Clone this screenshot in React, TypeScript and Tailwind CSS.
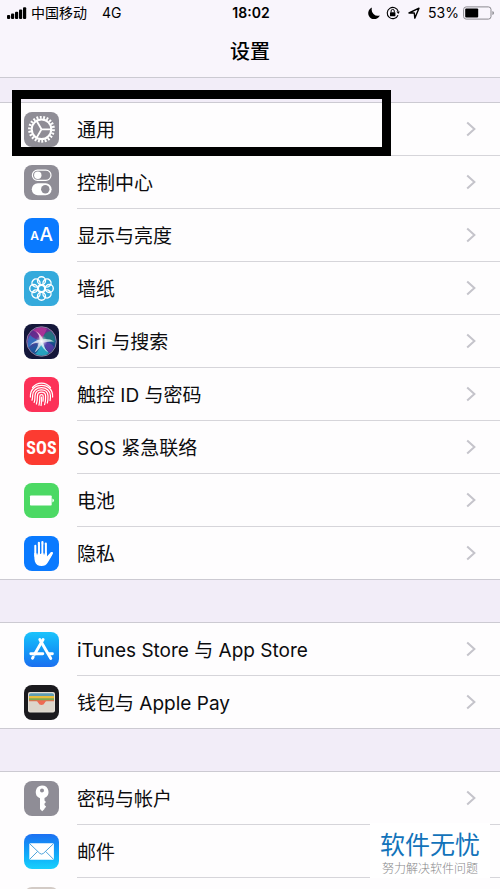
import React from 'react';

const Tile: React.FC<{ className: string; children?: React.ReactNode }> = ({ className, children }) => (
  <span className={`block w-[35px] h-[35px] shrink-0 rounded-lg overflow-hidden ${className}`}>
    <svg viewBox="0 0 35 35" className="block w-full h-full" aria-hidden="true">
      {children}
    </svg>
  </span>
);

const GeneralIcon = () => (
  <Tile className="bg-[#8f8d96]">
    <g fill="none" stroke="#fff">
      <circle cx="17.5" cy="17.3" r="12" strokeWidth="2.8" pathLength={44} strokeDasharray="1.1 0.9" />
      <circle cx="17.5" cy="17.3" r="9.8" strokeWidth="2.1" />
      <path d="M17.5 17.3H27M17.5 17.3L12.7 9M17.5 17.3L12.7 25.6" strokeWidth="1.8" />
    </g>
  </Tile>
);

const ControlIcon = () => (
  <Tile className="bg-[#8f8d96]">
    <rect x="8.4" y="5.2" width="18.6" height="10.2" rx="5.1" fill="none" stroke="#fff" strokeWidth="1.2" />
    <circle cx="13.8" cy="10.3" r="3.7" fill="#fff" />
    <rect x="7.8" y="18.2" width="19.8" height="12" rx="6" fill="#fff" />
    <circle cx="21.3" cy="24.2" r="4.2" fill="#8f8d96" />
  </Tile>
);

const DisplayIcon = () => (
  <Tile className="bg-[#0a7aff]">
    <g fill="#fff" className="font-['Inter',sans-serif]">
      <text x="6.2" y="22" fontSize="12" fontWeight="600">A</text>
      <text x="15.6" y="23.4" fontSize="19" fontWeight="500">A</text>
    </g>
  </Tile>
);

const WallpaperIcon = () => (
  <Tile className="bg-[#35aadc]">
    <g fill="none" stroke="#fff" strokeWidth="1.4">
      {[0, 45, 90, 135, 180, 225, 270, 315].map((a) => (
        <circle key={a} cx="17.5" cy="9.7" r="4" transform={`rotate(${a} 17.5 17.5)`} />
      ))}
      <circle cx="17.5" cy="17.5" r="3.2" />
    </g>
  </Tile>
);

const SiriIcon = () => (
  <Tile className="bg-[#14173a]">
    <defs>
      <linearGradient id="siri-orb" x1="0.2" y1="0" x2="0.7" y2="1">
        <stop offset="0" stopColor="#5a2a8c" />
        <stop offset="0.35" stopColor="#6a2f8f" />
        <stop offset="0.6" stopColor="#2157a0" />
        <stop offset="1" stopColor="#123a6a" />
      </linearGradient>
      <radialGradient id="siri-glow">
        <stop offset="0" stopColor="#fff" />
        <stop offset="0.3" stopColor="#fff" stopOpacity="0.6" />
        <stop offset="1" stopColor="#fff" stopOpacity="0" />
      </radialGradient>
    </defs>
    <circle cx="17.5" cy="17.5" r="14.6" fill="url(#siri-orb)" />
    <path d="M17.5 17Q20 7 27 7Q32 13 30.5 19Q24 16 17.5 17Z" fill="#1d8078" opacity="0.75" />
    <path d="M17.5 17Q14 8 9 6.5Q17 1 23 5Q20 10 17.5 17Z" fill="#c0359a" opacity="0.75" />
    <path d="M17.5 17Q8 18 4.5 24Q2 17 6 11Q10 15 17.5 17Z" fill="#2a80cc" opacity="0.75" />
    <path d="M18 17Q16 26 11 30Q20 34 25 29Q20 24 18 17Z" fill="#2dc7d9" opacity="0.7" />
    <path d="M18 17Q27 18 30 23Q28 28 25 29Q21 24 18 17Z" fill="#6b3cb4" opacity="0.7" />
    <g fill="#fff" opacity="0.7">
      <path d="M16 17Q15 9 11.5 7Q17.5 10 19.5 17Z" />
      <path d="M17 15.5Q25 14 30 17.5Q24 17 18 19Z" />
      <path d="M19 16.5Q20 25 24.5 28.5Q18 25 16 18Z" />
      <path d="M18.5 18Q16 25 10.5 28.5Q14 23 15.5 16Z" />
      <path d="M18 19Q10 18 5.5 22Q10 16 17 15.5Z" />
    </g>
    <circle cx="17.5" cy="17.3" r="6" fill="url(#siri-glow)" />
    <circle cx="17.5" cy="17.5" r="14.8" fill="none" stroke="#a898b8" strokeWidth="0.8" />
  </Tile>
);

const TouchIcon = () => (
  <Tile className="bg-[#fc3158]">
    <g fill="none" stroke="#fff" strokeWidth="1.25" strokeLinecap="round">
      <path d="M8.5 10.5C10.7 7.7 13.9 6 17.5 6C21.1 6 24.3 7.7 26.5 10.5" />
      <path d="M6.4 20C6 13 10.8 8.3 17.5 8.3C24.2 8.3 29 13 28.6 20" />
      <path d="M8 23.2C8.6 21.3 8.5 20.5 8.6 18.5C8.9 13.7 12.6 10.6 17.5 10.6C22.4 10.6 26.1 13.7 26.4 18.5C26.5 20.5 26.4 21.8 26.1 23.5" />
      <path d="M10.2 25.4C11 23.3 10.9 21.2 11 18.9C11.2 15.2 13.8 12.9 17.5 12.9C21.2 12.9 23.8 15.2 24 18.9C24.1 21.5 23.9 24 23.3 26" />
      <path d="M12.4 27C13.4 24.5 13.3 21.6 13.4 19C13.5 16.6 15.1 15.2 17.5 15.2C19.9 15.2 21.5 16.6 21.6 19C21.7 22.4 21.4 25.2 20.6 27.6" />
      <path d="M15 28.2C15.8 25.2 15.7 22.3 15.8 19.3C15.8 18.1 16.5 17.5 17.5 17.5C18.5 17.5 19.2 18.1 19.2 19.3C19.3 21.2 19.2 22.7 19 24.2M17.5 20.2C17.6 23.1 17.5 25.8 17.1 28.5" />
    </g>
  </Tile>
);

const SosIcon = () => (
  <Tile className="bg-[#fc3b31]">
    <text
      x="17.5"
      y="24"
      textAnchor="middle"
      fill="#fff"
      fontSize="18"
      fontWeight="700"
      className="font-['Roboto_Condensed','Roboto',sans-serif]"
    >
      SOS
    </text>
  </Tile>
);

const BatteryTileIcon = () => (
  <Tile className="bg-[#4cd964]">
    <rect x="6" y="12.4" width="21.7" height="10.2" rx="0.8" fill="#fff" />
    <path d="M28.4 15.6Q30 16.2 30 17.5Q30 18.8 28.4 19.4Z" fill="#fff" />
  </Tile>
);

const PrivacyIcon = () => (
  <Tile className="bg-[#0a7aff]">
    <g fill="none" stroke="#fff" strokeWidth="2.2" strokeLinecap="round">
      <path d="M11.4 9.8V20M14.9 6.8V19M18.4 6V19M21.8 7.6V20" />
      <path d="M27.8 17.2L23.6 23" />
    </g>
    <path d="M10.3 17H22.9V20.6L26.8 16.3Q28.2 15.3 28.9 16.7Q28.6 18.6 26.8 21.5L23.8 26.4Q21.8 29.9 17.6 29.9Q12.4 29.9 10.9 25.4Q10.3 23.4 10.3 20Z" fill="#fff" />
    <path d="M13.15 9V18.4M16.65 8V18M20.1 8.5V18.4" stroke="#0a7aff" strokeWidth="1" />
  </Tile>
);

const StoreIcon = () => (
  <Tile className="bg-gradient-to-b from-[#1cc3fb] to-[#1c6ff0]">
    <g stroke="#fff" strokeWidth="2.9" strokeLinecap="round" fill="none">
      <path d="M19.1 7.6L10.6 22.2" />
      <path d="M15.8 7.6L26.8 26.6" />
      <path d="M6.8 21.8H18.8M24.2 21.8H28.4" />
      <path d="M9.2 25.1L8.5 26.3" />
    </g>
  </Tile>
);

const WalletIcon = () => (
  <Tile className="bg-[#1b1a1e]">
    <rect x="4" y="7" width="27" height="20.4" rx="2" fill="#e4dfd6" />
    <path d="M5 10Q5 8.2 6.8 8.2H28.2Q30 8.2 30 10V13H5Z" fill="#5e9db4" />
    <path d="M5 11H30V15H5Z" fill="#e9bd3c" />
    <path d="M5 13.2H30V17H5Z" fill="#7daa52" />
    <path d="M5 15.2H30V21H5Z" fill="#ee6a53" />
    <path d="M5 16.2H12.4Q13.4 16.2 14 17.4Q15.2 20 17.5 20Q19.8 20 21 17.4Q21.6 16.2 22.6 16.2H30V25Q30 26.5 28.5 26.5H6.5Q5 26.5 5 25Z" fill="#dcd6cb" />
  </Tile>
);

const KeyIcon = () => (
  <Tile className="bg-[#8f8d96]">
    <path
      fillRule="evenodd"
      fill="#fff"
      d="M18 4.6A6.5 6.5 0 0 1 20.5 17.1V19.4L22 21L20.5 22.6V24L22.2 25.8L20.5 27.4V28L18.2 30.2L16 28V17.2A6.5 6.5 0 0 1 18 4.6ZM18 7.6A2 2 0 1 0 18 11.6A2 2 0 1 0 18 7.6Z"
    />
  </Tile>
);

const MailIcon = () => (
  <Tile className="bg-gradient-to-b from-[#1d70f2] to-[#1ad0fc]">
    <rect x="5.3" y="9.2" width="24.6" height="16.6" rx="1.4" fill="#fff" />
    <path
      d="M5.8 9.8L15.7 19.3Q17.6 21 19.5 19.3L29.4 9.8M5.8 25.2L13.6 17.4M29.4 25.2L21.6 17.4"
      fill="none"
      stroke="#3b9bd8"
      strokeWidth="0.9"
    />
  </Tile>
);

type Row = { label: string; href: string; icon: React.ReactNode };

const groups: Row[][] = [
  [
    { label: '通用', href: '#general', icon: <GeneralIcon /> },
    { label: '控制中心', href: '#control-center', icon: <ControlIcon /> },
    { label: '显示与亮度', href: '#display', icon: <DisplayIcon /> },
    { label: '墙纸', href: '#wallpaper', icon: <WallpaperIcon /> },
    { label: 'Siri 与搜索', href: '#siri', icon: <SiriIcon /> },
    { label: '触控 ID 与密码', href: '#touch-id', icon: <TouchIcon /> },
    { label: 'SOS 紧急联络', href: '#sos', icon: <SosIcon /> },
    { label: '电池', href: '#battery', icon: <BatteryTileIcon /> },
    { label: '隐私', href: '#privacy', icon: <PrivacyIcon /> },
  ],
  [
    { label: 'iTunes Store 与 App Store', href: '#store', icon: <StoreIcon /> },
    { label: '钱包与 Apple Pay', href: '#wallet', icon: <WalletIcon /> },
  ],
  [
    { label: '密码与帐户', href: '#accounts', icon: <KeyIcon /> },
    { label: '邮件', href: '#mail', icon: <MailIcon /> },
    { label: '', href: '#contacts', icon: <Tile className="bg-[#d3cbc6]" /> },
  ],
];

const SettingsRow: React.FC<{ row: Row; last: boolean }> = ({ row, last }) => (
  <li className={last ? 'border-b border-[#cccad2]' : ''}>
    <a href={row.href} className={`flex items-center pl-6 ${last ? 'h-[52px]' : 'h-[53px]'}`}>
      {row.icon}
      <span
        className={`flex flex-1 items-center justify-between self-stretch ml-[18px] pr-6 ${
          last ? '' : 'border-b border-[#d6d5da]'
        }`}
      >
        <span className="pt-1 text-[19px] leading-6 text-[#0c0c0e]">{row.label}</span>
        <svg viewBox="0 0 10 16" className="w-[10px] h-4" aria-hidden="true">
          <path d="M1.2 1.4L8.4 8L1.2 14.6" fill="none" stroke="#c5c4cb" strokeWidth="2" />
        </svg>
      </span>
    </a>
  </li>
);

const StatusBar = () => (
  <div className="grid grid-cols-[1fr_auto_1fr] items-center h-[26px] pl-[7px] pr-[5px] text-sm leading-5">
    <div className="flex items-center">
      <svg viewBox="0 0 20 12" className="w-5 h-3 mr-1" aria-hidden="true">
        <rect x="0" y="8" width="3.2" height="4" rx="1" />
        <rect x="4" y="6.5" width="3.2" height="5.5" rx="1" />
        <rect x="8" y="4.8" width="3.2" height="7.2" rx="1" />
        <rect x="12" y="2.6" width="3.2" height="9.4" rx="1" />
        <rect x="16" y="0.2" width="3.2" height="11.8" rx="1" />
      </svg>
      <span>中国移动</span>
      <span className="ml-[15px]">4G</span>
    </div>
    <time className="font-semibold">18:02</time>
    <div className="flex items-center justify-end">
      <svg viewBox="0 0 12 12" className="w-3 h-3" aria-hidden="true">
        <path d="M4 0.6A6 6 0 1 0 11.8 8.4A6.2 6.2 0 0 1 4 0.6Z" />
      </svg>
      <svg viewBox="0 0 14 14" className="w-[14px] h-[14px] ml-[6px]" aria-hidden="true">
        <path d="M12 9.2A5.6 5.6 0 1 1 12.2 5.4" fill="none" stroke="#000" strokeWidth="1.1" />
        <path d="M10.4 5.4H13.8L12.3 8Z" />
        <rect x="4" y="6.2" width="5.4" height="4" rx="0.5" />
        <path d="M5.1 6.4V5A1.6 1.6 0 0 1 8.3 5V6.4" fill="none" stroke="#000" strokeWidth="1" />
      </svg>
      <svg viewBox="0 0 12 12" className="w-3 h-3 ml-2" aria-hidden="true">
        <path d="M1 6L11 1.2L6.8 11.2L6.3 6Z" fill="none" stroke="#000" strokeWidth="1.4" strokeLinejoin="round" />
      </svg>
      <span className="ml-2">53%</span>
      <svg viewBox="0 0 32 14" className="w-8 h-[14px] ml-1" aria-hidden="true">
        <rect x="0.6" y="0.9" width="27.4" height="12.2" rx="2.6" fill="none" stroke="#8b898f" strokeWidth="1" />
        <rect x="2.2" y="2.6" width="13" height="8.8" rx="1" />
        <path d="M29.4 5Q31 5.6 31 7Q31 8.4 29.4 9Z" fill="#8b898f" />
      </svg>
    </div>
  </div>
);

export default function App() {
  return (
    <div className="relative h-screen overflow-hidden bg-[#f2edf8] text-black font-['Inter','Noto_Sans_CJK_SC',sans-serif]">
      <header className="bg-[#f9f5fc] border-b border-[#cccad2]">
        <StatusBar />
        <h1 className="h-[51px] pt-[13px] text-center text-xl leading-[26px] font-medium">设置</h1>
      </header>

      <main className="flex flex-col gap-[42px] pt-6">
        {groups.map((rows, i) => (
          <ul key={i} className="relative bg-[#fefdfe] border-t border-[#cccad2]">
            {rows.map((row, j) => (
              <SettingsRow key={row.href} row={row} last={j === rows.length - 1} />
            ))}
            {i === 0 && (
              <li
                aria-hidden="true"
                className="absolute left-3 right-[109px] -top-[13px] h-[66px] border-[9px] border-black pointer-events-none"
              />
            )}
          </ul>
        ))}
      </main>

      <aside className="absolute right-[10px] bottom-[11px] flex flex-col items-center w-[120px] h-[55px] pt-[7px] bg-white">
        <strong className="text-[25px] leading-[31px] font-normal text-[#1273ba]">软件无忧</strong>
        <span className="text-xs leading-4 font-light text-[#88888a]">努力解决软件问题</span>
      </aside>
    </div>
  );
}
